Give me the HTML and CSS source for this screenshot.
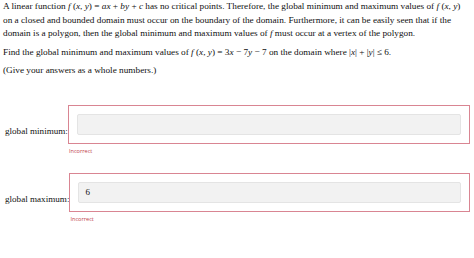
FILE: index.html
```html
<!DOCTYPE html>
<html>
<head>
  <title>Linear function extrema</title>
  <link rel="stylesheet" href="styles.css">
</head>
<body>
  <div class="question">
    <p>A linear function <i>f</i> (<i>x</i>, <i>y</i>) = <i>ax</i> + <i>by</i> + <i>c</i> has no critical points. Therefore, the global minimum and maximum values of <i>f</i> (<i>x</i>, <i>y</i>) on a closed and bounded domain must occur on the boundary of the domain. Furthermore, it can be easily seen that if the domain is a polygon, then the global minimum and maximum values of <i>f</i> must occur at a vertex of the polygon.</p>
    <p>Find the global minimum and maximum values of <i>f</i> (<i>x</i>, <i>y</i>) = 3<i>x</i> &minus; 7<i>y</i> &minus; 7 on the domain where |<i>x</i>| + |<i>y</i>| &le; 6.</p>
    <p>(Give your answers as a whole numbers.)</p>

    <div class="answer-row first">
      <label class="answer-label">global minimum:</label>
      <div class="answer-wrap">
        <div class="answer-box">
          <input type="text" class="answer-input" value="">
        </div>
        <div class="feedback">Incorrect</div>
      </div>
    </div>

    <div class="answer-row">
      <label class="answer-label">global maximum:</label>
      <div class="answer-wrap">
        <div class="answer-box">
          <input type="text" class="answer-input" value="6">
        </div>
        <div class="feedback">Incorrect</div>
      </div>
    </div>
  </div>
</body>
</html>
```

FILE: styles.css
```css
body {
  margin: 0;
  padding: 0 4px 0 3px;
  font-family: "Liberation Serif", "Times New Roman", serif;
  color: #111;
}

.question p {
  font-size: 9.25px;
  line-height: 13.5px;
  margin: 0 0 5px;
}

.answer-row {
  display: flex;
  align-items: flex-start;
  margin-top: 17px;
}

.answer-row.first {
  margin-top: 27px;
}

.answer-label {
  font-size: 9.1px;
  line-height: 14px;
  padding-left: 2px;
  margin-top: 19px;
}

.answer-wrap {
  flex: 1;
}

.answer-box {
  border: 1px solid #d98592;
  padding: 8px;
}

.answer-input {
  display: block;
  box-sizing: border-box;
  width: 100%;
  height: 21px;
  margin: 0;
  padding: 0 6px;
  border: 1px solid #e4e4e4;
  border-radius: 2px;
  background: #f2f2f2;
  font-family: "Liberation Serif", "Times New Roman", serif;
  font-size: 9px;
  color: #111;
}

.feedback {
  font-family: "Open Sans", "Liberation Sans", sans-serif;
  font-size: 5.6px;
  line-height: 9px;
  color: #c0414b;
  margin-top: 3px;
  padding-left: 1px;
}
```
